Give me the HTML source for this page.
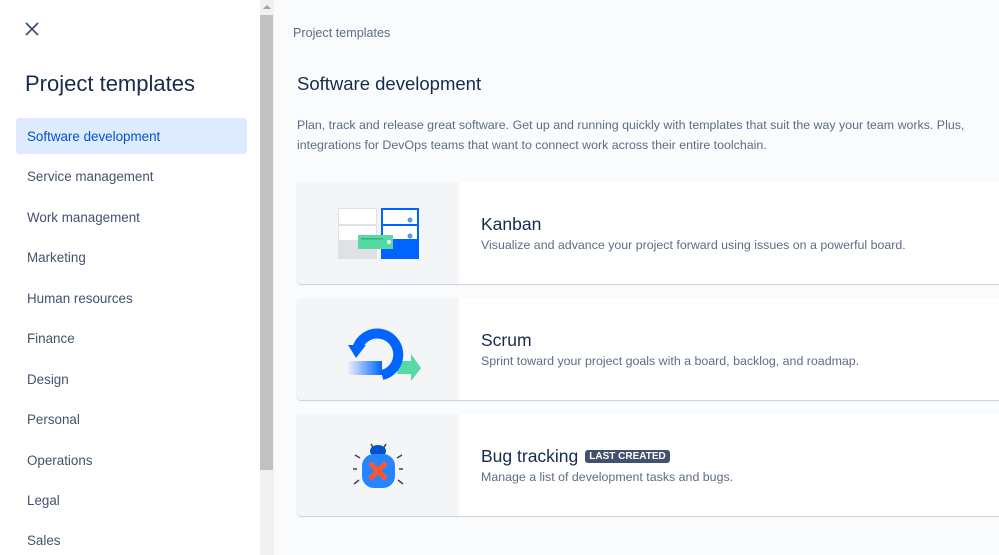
<!DOCTYPE html>
<html><head><style>
*{margin:0;padding:0;box-sizing:border-box}
body{width:999px;height:555px;overflow:hidden;font-family:"Liberation Sans",sans-serif;background:#fafbfc;position:relative;color:#172b4d}
.side{position:absolute;left:0;top:0;width:260px;height:555px;background:#fff}
.sb{position:absolute;left:260px;top:0;width:14px;height:555px;background:#f1f1f1}
.thumb{position:absolute;left:260px;top:15px;width:13px;height:455px;background:#c1c1c1}
.arr{position:absolute;left:263px;top:5px;width:0;height:0;border-left:4px solid transparent;border-right:4px solid transparent;border-bottom:4px solid #a3a3a3}
h1{position:absolute;left:25px;top:71px;font-size:22px;font-weight:normal;color:#172b4d}
.nav div{position:absolute;left:27px;font-size:13.4px;color:#42526e}
.sel{position:absolute;left:16px;top:118px;width:231px;height:36px;background:#deebff;border-radius:3px}
.crumb{position:absolute;left:293px;top:26px;font-size:12.6px;color:#5e6c84}
h2{position:absolute;left:297px;top:73px;font-size:18.5px;font-weight:normal}
.desc{position:absolute;left:297px;top:115px;font-size:12.4px;line-height:20px;color:#5e6c84;width:705px}
.card{position:absolute;left:297px;width:720px;height:102px;background:#fff;border-radius:4px;box-shadow:0 1px 1px rgba(9,30,66,.2);overflow:hidden}
.card .img{position:absolute;left:0;top:0;width:162px;height:102px;background:#f4f5f7}
.card .t{position:absolute;left:184px;top:32px;font-size:17.5px}
.card .d{position:absolute;left:184px;top:56px;font-size:12.4px;color:#5e6c84}
.card svg{position:absolute;left:0;top:0}
.badge{display:inline-block;background:#42526e;color:#fff;font-size:10px;font-weight:bold;padding:1px 4px;border-radius:3px;vertical-align:3px;margin-left:7px}
</style></head><body>
<div class="side">
<svg style="position:absolute;left:25px;top:22px" width="14" height="14"><path d="M1 1L13 13M13 1L1 13" stroke="#42526e" stroke-width="1.8"/></svg>
<h1>Project templates</h1>
<div class="sel"></div>
<div class="nav">
<div style="top:129px;color:#0052cc">Software development</div>
<div style="top:169px">Service management</div>
<div style="top:210px">Work management</div>
<div style="top:250px">Marketing</div>
<div style="top:291px">Human resources</div>
<div style="top:331px">Finance</div>
<div style="top:372px">Design</div>
<div style="top:412px">Personal</div>
<div style="top:453px">Operations</div>
<div style="top:493px">Legal</div>
<div style="top:533px">Sales</div>
</div></div>
<div class="sb"></div><div class="thumb"></div><div class="arr"></div>
<div class="crumb">Project templates</div>
<h2>Software development</h2>
<div class="desc">Plan, track and release great software. Get up and running quickly with templates that suit the way your team works. Plus, integrations for DevOps teams that want to connect work across their entire toolchain.</div>
<div class="card" style="top:182px"><div class="img"></div>
<svg width="162" height="102"><rect x="41" y="26" width="39" height="51" fill="#dfe1e6"/><rect x="42" y="27" width="37" height="15" fill="#fff"/><rect x="42" y="44" width="37" height="14" fill="#fff"/><rect x="84" y="26" width="38" height="51" fill="#0065ff"/><rect x="86" y="28" width="34" height="14" fill="#fff"/><rect x="86" y="44" width="34" height="13" fill="#fff"/><circle cx="113" cy="38" r="2.5" fill="#4c9aff"/><circle cx="113" cy="54" r="2.5" fill="#4c9aff"/><rect x="61" y="53" width="35" height="14" fill="#57d9a3"/><circle cx="92" cy="60" r="2" fill="#fff"/><rect x="64" y="56" width="22" height="1.5" fill="#36b37e"/></svg>
<div class="t">Kanban</div><div class="d">Visualize and advance your project forward using issues on a powerful board.</div></div>
<div class="card" style="top:298px"><div class="img"></div>
<svg width="162" height="102"><defs><linearGradient id="g" x1="0" x2="1"><stop offset="0" stop-color="#0065ff" stop-opacity="0"/><stop offset="1" stop-color="#0065ff"/></linearGradient></defs><path d="M100 63h14v-7l10 14-10 13v-7h-14z" fill="#57d9a3"/><rect x="50" y="63" width="35" height="14" fill="url(#g)"/><path d="M85 77a21 21 0 1 0-25-26" fill="none" stroke="#0065ff" stroke-width="10"/><path d="M51 47l18 0-10 13z" fill="#0065ff"/></svg>
<div class="t">Scrum</div><div class="d">Sprint toward your project goals with a board, backlog, and roadmap.</div></div>
<div class="card" style="top:414px"><div class="img"></div>
<svg width="162" height="102"><path d="M74 30l3 5M89 30l-3 5M63 44l-5-3M100 44l5-3M60 55h-4M102 55h4M62 66l-5 4M101 66l5 4" stroke="#344563" stroke-width="1.5" fill="none"/><ellipse cx="81" cy="37" rx="8" ry="6" fill="#0052cc"/><rect x="65" y="40" width="33" height="34" rx="12" fill="#2684ff"/><path d="M73 49l16 16M89 49l-16 16" stroke="#ff5630" stroke-width="5"/></svg>
<div class="t">Bug tracking<span class="badge">LAST CREATED</span></div><div class="d">Manage a list of development tasks and bugs.</div></div>
</body></html>
